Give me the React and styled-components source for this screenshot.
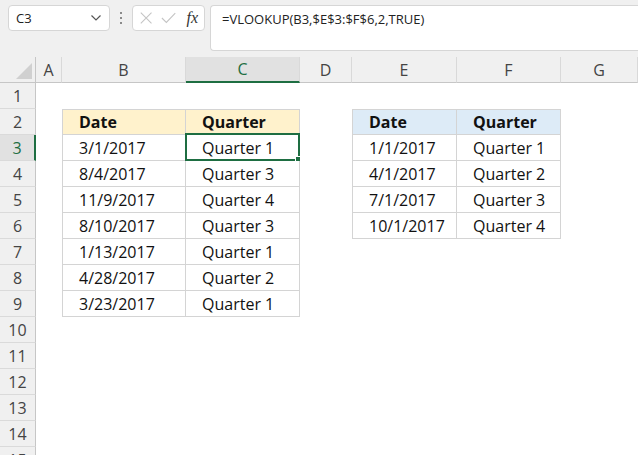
import React from 'react'
import styled, { createGlobalStyle } from 'styled-components'

const GlobalStyle = createGlobalStyle`
  html, body { margin: 0; padding: 0; background: #f0f0f0; overflow: hidden; }
  * { box-sizing: border-box; }
`

const Window = styled.div`
  width: 638px;
  height: 455px;
  overflow: hidden;
  background: #f0f0f0;
  font-family: 'Open Sans', 'Noto Sans', sans-serif;
`

const Toolbar = styled.div`
  height: 57px;
  display: flex;
  align-items: flex-start;
  padding: 5px 0 0 8px;
`

const NameBox = styled.div`
  width: 102px;
  height: 26px;
  background: #fff;
  border: 1px solid #d6d6d6;
  border-radius: 4px;
  display: flex;
  align-items: center;
  justify-content: space-between;
  padding: 0 7px 0 7px;
  font-size: 13px;
  color: #222;
`

const Grip = styled.div`
  width: 22px;
  height: 26px;
  display: flex;
  flex-direction: column;
  align-items: center;
  justify-content: center;
  gap: 3px;
  & span { width: 2px; height: 2px; background: #8a8a8a; }
`

const FxBox = styled.div`
  width: 73px;
  height: 26px;
  background: #fff;
  border: 1px solid #d6d6d6;
  border-radius: 4px;
  display: flex;
  align-items: center;
  gap: 8px;
  padding: 0 6px;
`

const FxLabel = styled.span`
  font-family: 'Liberation Serif', serif;
  font-style: italic;
  font-size: 16px;
  color: #333;
  margin-left: 2px;
`

const FormulaBar = styled.div`
  flex: 1;
  height: 46px;
  margin-left: 5px;
  background: #fff;
  border: 1px solid #d6d6d6;
  border-right: none;
  border-radius: 4px 0 0 4px;
  padding: 4px 0 0 11px;
  font-size: 13px;
  color: #222;
`

const Sheet = styled.div`
  display: grid;
  grid-template-columns: 36px 26px 124px 114px 52px 105px 104px 1fr;
  grid-template-rows: 26px;
  grid-auto-rows: 26px;
`

const Corner = styled.div`
  position: relative;
  background: #f0f0f0;
  border-right: 1px solid #c6c6c6;
  border-bottom: 1px solid #c6c6c6;
  & svg { position: absolute; right: 3px; bottom: 3px; }
`

const ColHead = styled.div`
  display: flex;
  align-items: center;
  justify-content: center;
  font-size: 16px;
  background: ${p => (p.$active ? '#e1e1e1' : '#f0f0f0')};
  color: ${p => (p.$active ? '#1e6e42' : '#444')};
  border-right: 1px solid #d9d9d9;
  border-bottom: ${p => (p.$active ? '2px solid #1e6e42' : '1px solid #c6c6c6')};
`

const RowHead = styled.div`
  display: flex;
  align-items: center;
  justify-content: center;
  font-size: 16px;
  background: ${p => (p.$active ? '#e1e1e1' : '#f0f0f0')};
  color: ${p => (p.$active ? '#1e6e42' : '#444')};
  border-bottom: 1px solid #dadada;
  border-right: ${p => (p.$active ? '2px solid #1e6e42' : '1px solid #c6c6c6')};
`

const Cell = styled.div`
  position: relative;
  display: flex;
  align-items: center;
  padding-left: 16px;
  background: ${p => p.$bg || '#fff'};
  font-size: 16px;
  font-weight: ${p => (p.$bold ? 700 : 400)};
  color: #111;
  white-space: nowrap;
  border-right: ${p => (p.$boxed ? '1px solid #d4d4d4' : 'none')};
  border-bottom: ${p => (p.$boxed ? '1px solid #d4d4d4' : 'none')};
  border-top: ${p => (p.$top ? '1px solid #d4d4d4' : 'none')};
  border-left: ${p => (p.$left ? '1px solid #d4d4d4' : 'none')};
`

const Selection = styled.div`
  position: absolute;
  left: -1px;
  top: -2px;
  right: -1px;
  bottom: -1px;
  border: 2px solid #1e6e42;
  pointer-events: none;
  &::after {
    content: '';
    position: absolute;
    right: -5px;
    bottom: -5px;
    width: 6px;
    height: 6px;
    background: #1e6e42;
    border: 1px solid #fff;
  }
`

const columns = ['A', 'B', 'C', 'D', 'E', 'F', 'G']

const lookupTable = [
  ['Date', 'Quarter'],
  ['3/1/2017', 'Quarter 1'],
  ['8/4/2017', 'Quarter 3'],
  ['11/9/2017', 'Quarter 4'],
  ['8/10/2017', 'Quarter 3'],
  ['1/13/2017', 'Quarter 1'],
  ['4/28/2017', 'Quarter 2'],
  ['3/23/2017', 'Quarter 1'],
]

const quarterTable = [
  ['Date', 'Quarter'],
  ['1/1/2017', 'Quarter 1'],
  ['4/1/2017', 'Quarter 2'],
  ['7/1/2017', 'Quarter 3'],
  ['10/1/2017', 'Quarter 4'],
]

// tables: start column index (0 = A), start row, header colour, data
const tables = [
  { col: 1, row: 2, head: '#fff2cc', data: lookupTable },
  { col: 4, row: 2, head: '#ddebf7', data: quarterTable },
]

const cellAt = (c, r) => {
  for (const t of tables) {
    const dr = r - t.row
    const dc = c - t.col
    if (dr >= 0 && dr < t.data.length && dc >= 0 && dc < 2) {
      return {
        text: t.data[dr][dc],
        bg: dr === 0 ? t.head : '#fff',
        bold: dr === 0,
        top: dr === 0,
        left: dc === 0,
      }
    }
  }
  return null
}

const Chevron = () => (
  <svg width="12" height="8" viewBox="0 0 12 8">
    <path d="M1.5 1.5 L6 6 L10.5 1.5" fill="none" stroke="#555" strokeWidth="1.2" />
  </svg>
)

const Cross = () => (
  <svg width="16" height="16" viewBox="0 0 16 16">
    <path d="M2 2 L14 14 M14 2 L2 14" stroke="#c4c4c4" strokeWidth="1.2" />
  </svg>
)

const Check = () => (
  <svg width="17" height="14" viewBox="0 0 17 14">
    <path d="M1 7 L6 12 L16 1.5" fill="none" stroke="#c4c4c4" strokeWidth="1.2" />
  </svg>
)

const App = () => {
  const rows = Array.from({ length: 15 }, (_, i) => i + 1)
  return (
    <Window>
      <GlobalStyle />
      <Toolbar>
        <NameBox>
          <span>C3</span>
          <Chevron />
        </NameBox>
        <Grip><span /><span /><span /></Grip>
        <FxBox>
          <Cross />
          <Check />
          <FxLabel>fx</FxLabel>
        </FxBox>
        <FormulaBar>=VLOOKUP(B3,$E$3:$F$6,2,TRUE)</FormulaBar>
      </Toolbar>
      <Sheet>
        <Corner>
          <svg width="16" height="16" viewBox="0 0 16 16">
            <path d="M16 0 L16 16 L0 16 Z" fill="#d0d0d0" />
          </svg>
        </Corner>
        {columns.map(c => (
          <ColHead key={c} $active={c === 'C'}>{c}</ColHead>
        ))}
        {rows.map(r => (
          <React.Fragment key={r}>
            <RowHead $active={r === 3}>{r}</RowHead>
            {columns.map((c, ci) => {
              const cell = cellAt(ci, r)
              if (!cell) return <Cell key={c} />
              return (
                <Cell
                  key={c}
                  $bg={cell.bg}
                  $bold={cell.bold}
                  $boxed
                  $top={cell.top}
                  $left={cell.left}
                >
                  {cell.text}
                  {c === 'C' && r === 3 && <Selection />}
                </Cell>
              )
            })}
          </React.Fragment>
        ))}
      </Sheet>
    </Window>
  )
}

export default App
